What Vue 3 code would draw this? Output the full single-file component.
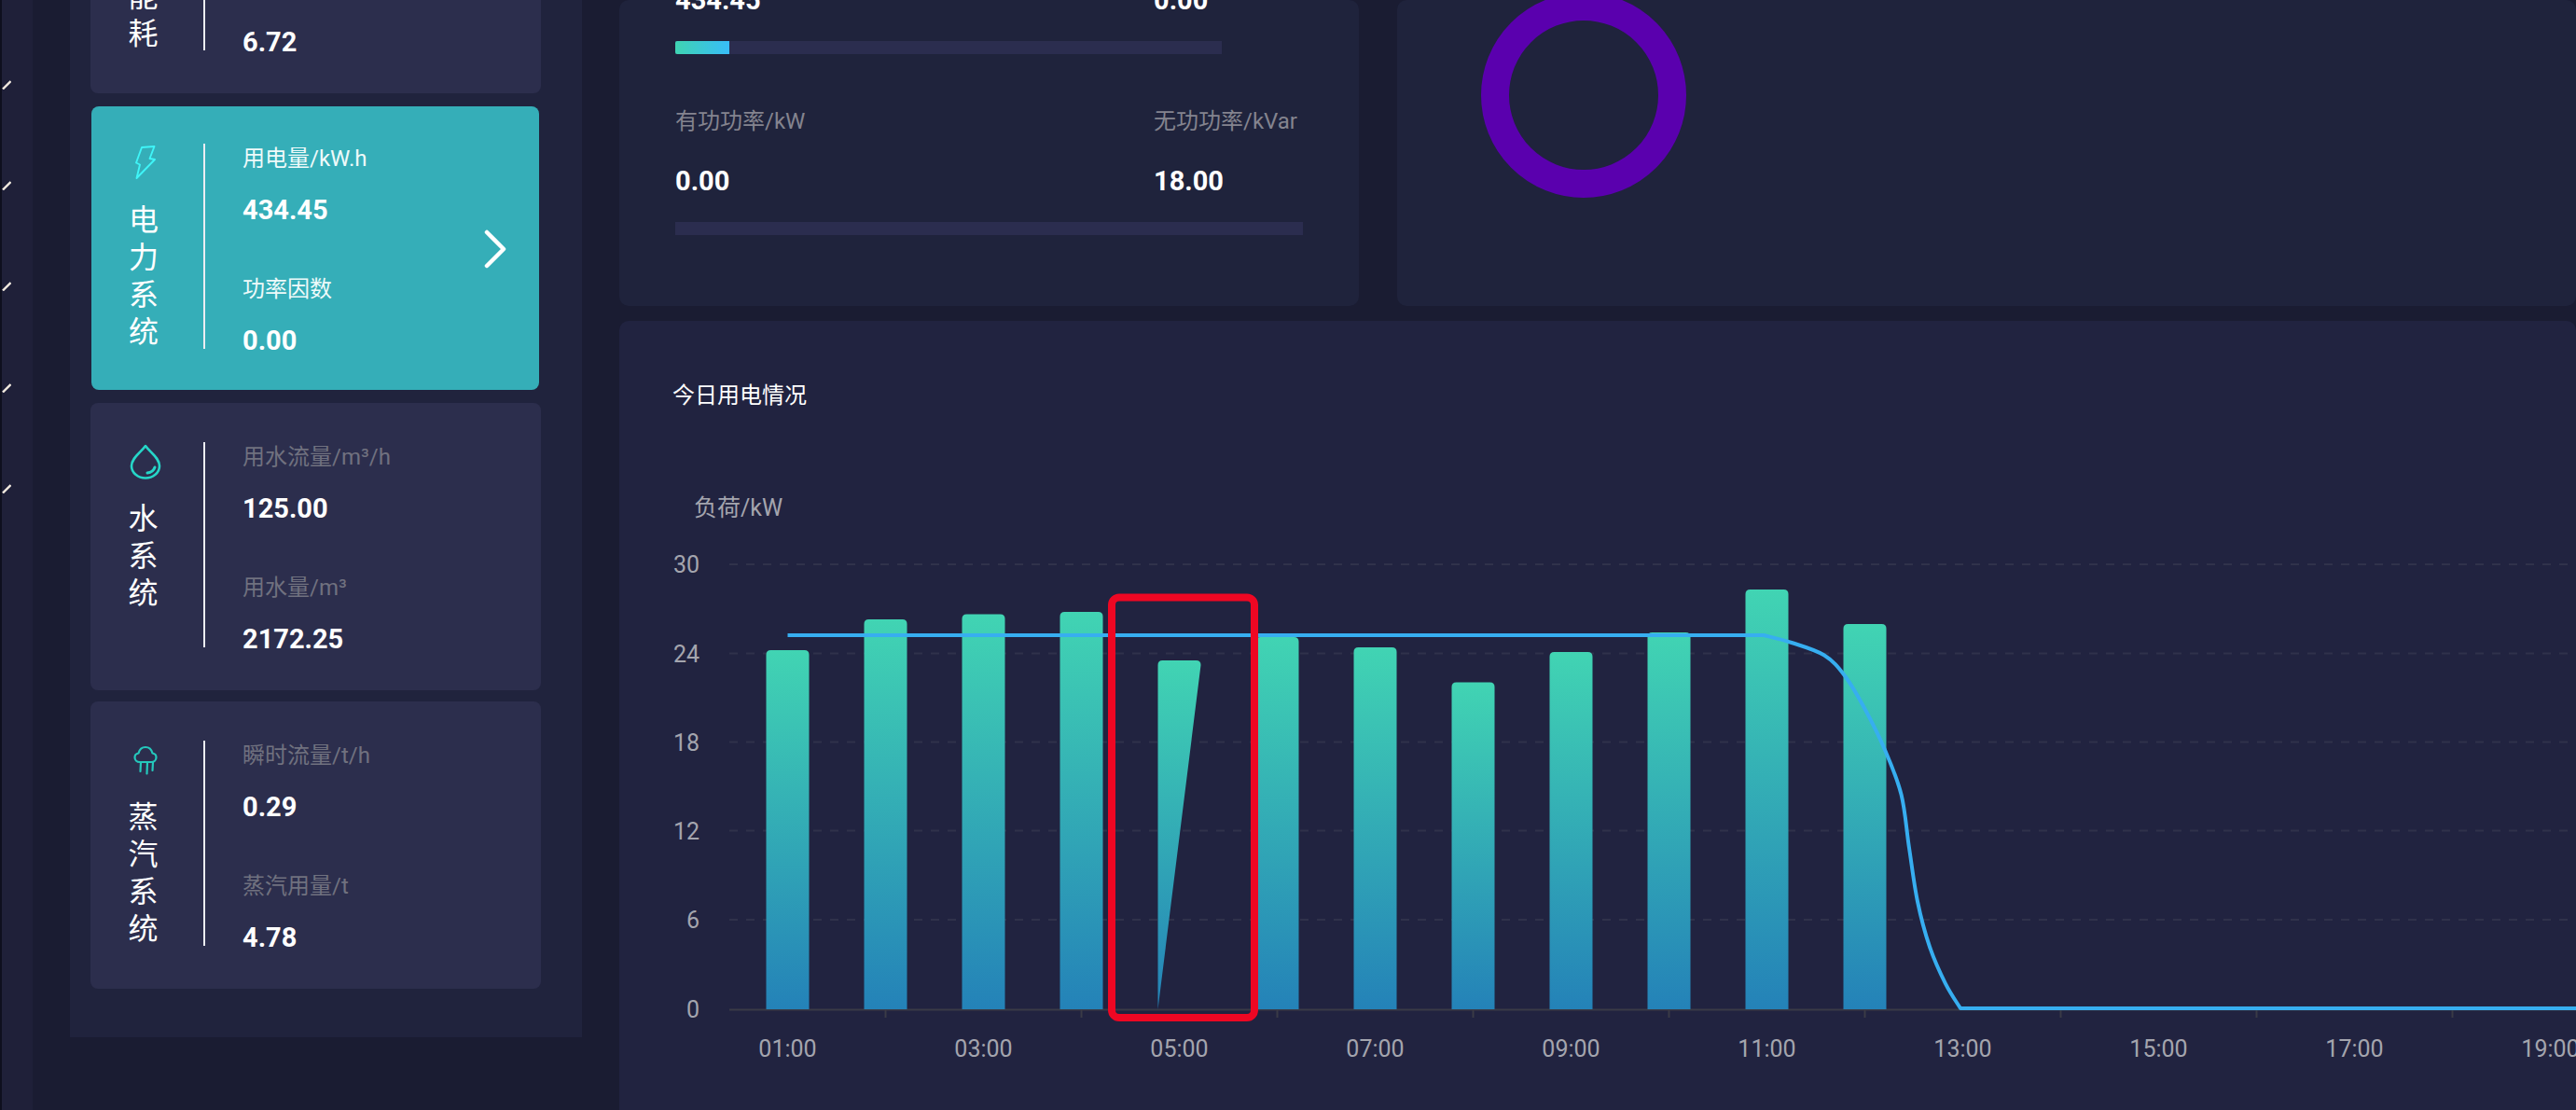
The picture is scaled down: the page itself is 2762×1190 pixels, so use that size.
<script setup>
const ticks = [0, 1, 2, 3, 4]

const systems = [
  { id: 'energy', name: '综合能耗', icon: '', m1: ['', ''], m2: ['', '6.72'] },
  { id: 'power', name: '电力系统', icon: 'bolt', active: true, m1: ['用电量/kW.h', '434.45'], m2: ['功率因数', '0.00'] },
  { id: 'water', name: '水系统', icon: 'drop', m1: ['用水流量/m³/h', '125.00'], m2: ['用水量/m³', '2172.25'] },
  { id: 'steam', name: '蒸汽系统', icon: 'steam', m1: ['瞬时流量/t/h', '0.29'], m2: ['蒸汽用量/t', '4.78'] }
]

const yAxis = [
  { label: '30', y: 605 },
  { label: '24', y: 700.5 },
  { label: '18', y: 795.5 },
  { label: '12', y: 890.5 },
  { label: '6', y: 986 },
  { label: '0', y: 1082 }
]

const xCenter = (i) => 844.5 + 105 * i
const xLabels = [0, 2, 4, 6, 8, 10, 12, 14, 16, 18].map((i) => ({
  x: xCenter(i),
  text: String(i + 1).padStart(2, '0') + ':00'
}))
const xTicks = [1, 3, 5, 7, 9, 11, 13, 15, 17].map(xCenter)

const tops = [697, 664, 658.5, 656, 708, 683, 694, 731.5, 699, 678, 632, 669]
const base = 1082
const barW = 46
const bars = tops.map((top, i) => {
  const l = xCenter(i) - barW / 2
  const r = l + barW
  const end = i === 4 ? `L${l} ${base}` : `V${base} H${l}`
  return `M${l} ${base} V${top + 5} Q${l} ${top} ${l + 5} ${top} H${r - 5} Q${r} ${top} ${r} ${top + 5} ${end} Z`
})

const curve = [
  [1891, 681], [1921, 689], [1956, 702.5], [1978, 724.5], [1999.5, 760], [2021, 804],
  [2038.6, 852], [2047, 909], [2056, 966.5], [2069, 1015], [2086, 1054.6], [2102, 1081]
]
let linePath = 'M844.5 681 L1891 681'
for (let i = 0; i < curve.length - 1; i++) {
  const p0 = curve[Math.max(i - 1, 0)]
  const p1 = curve[i]
  const p2 = curve[i + 1]
  const p3 = curve[Math.min(i + 2, curve.length - 1)]
  const c1 = [p1[0] + (p2[0] - p0[0]) / 6, p1[1] + (p2[1] - p0[1]) / 6]
  const c2 = [p2[0] - (p3[0] - p1[0]) / 6, p2[1] - (p3[1] - p1[1]) / 6]
  linePath += ` C${c1[0]} ${c1[1]} ${c2[0]} ${c2[1]} ${p2[0]} ${p2[1]}`
}
linePath += ' L2762 1081'
</script>

<template>
  <div class="page">
    <nav class="rail">
      <svg v-for="t in ticks" :key="t" class="tick" width="10" height="10" viewBox="0 0 10 10">
        <path d="M1 9.5 L9.5 1" />
      </svg>
    </nav>

    <aside class="panel">
      <div class="system-list">
        <section v-for="s in systems" :key="s.id" class="system" :class="{ active: s.active }">
          <div class="name-col">
            <div class="icon-box">
              <svg v-if="s.icon === 'bolt'" class="ic ic-bolt" width="22" height="37" viewBox="0 0 22 37">
                <path d="M7 2 L20.5 1 L15.5 14 L21 15 L1.5 35 L5 20.5 L1 18.5 Z" />
              </svg>
              <svg v-if="s.icon === 'drop'" class="ic ic-drop" width="34" height="38" viewBox="0 0 34 38">
                <path d="M17 2 C12 9 2 15 2 23.5 C2 31 9 36.5 17 36.5 C25 36.5 32 31 32 23.5 C32 15 22 9 17 2 Z" />
                <path class="glint" d="M19 31 C23 30.5 26 28 27 25" />
              </svg>
              <svg v-if="s.icon === 'steam'" class="ic ic-steam" width="26" height="32" viewBox="0 0 26 32">
                <path d="M7 18 C3.5 18 1.5 15.5 1.5 13 C1.5 10.5 3.5 8.8 5.5 8.5 C6.5 4.5 9.5 2 13 2 C16.5 2 19.5 4.5 20.5 8.5 C22.5 8.8 24.5 10.5 24.5 13 C24.5 15.5 22.5 18 19 18 H9" />
                <path d="M8 18 L7.5 28 M15 18 L14.5 30.5 M21 18 L20.5 27" />
              </svg>
            </div>
            <span v-for="c in s.name" :key="c" class="name-char">{{ c }}</span>
          </div>
          <div class="divider"></div>
          <div class="metrics">
            <div class="metric">
              <div class="m-label">{{ s.m1[0] }}</div>
              <div class="m-value">{{ s.m1[1] }}</div>
            </div>
            <div class="metric">
              <div class="m-label">{{ s.m2[0] }}</div>
              <div class="m-value">{{ s.m2[1] }}</div>
            </div>
          </div>
          <svg v-if="s.active" class="chevron" width="24" height="42" viewBox="0 0 24 42">
            <path d="M3 3 L21 21 L3 39" />
          </svg>
        </section>
      </div>
    </aside>

    <main class="main">
      <div class="top-row">
        <section class="card power-card">
          <div class="pw-block">
            <div class="pw-cols">
              <div class="pw-col"><div class="pw-value">434.45</div></div>
              <div class="pw-col"><div class="pw-value">0.00</div></div>
            </div>
            <div class="track track-short"><div class="fill"></div></div>
          </div>
          <div class="pw-block pw-second">
            <div class="pw-cols">
              <div class="pw-col">
                <div class="pw-label">有功功率/kW</div>
                <div class="pw-value spaced">0.00</div>
              </div>
              <div class="pw-col">
                <div class="pw-label">无功功率/kVar</div>
                <div class="pw-value spaced">18.00</div>
              </div>
            </div>
            <div class="track track-long"></div>
          </div>
        </section>
        <section class="card ring-card">
          <div class="ring"></div>
        </section>
      </div>

      <section class="card chart-card">
        <h3 class="chart-title">今日用电情况</h3>
        <svg class="chart" width="2098" height="690" viewBox="664 500 2098 690">
          <defs>
            <linearGradient id="barGrad" x1="0" y1="0" x2="0" y2="1">
              <stop offset="0" stop-color="#41d4b3" />
              <stop offset="1" stop-color="#2482b8" />
            </linearGradient>
          </defs>
          <text x="744" y="553" class="axis-text">负荷/kW</text>
          <g v-for="g in yAxis" :key="g.label">
            <line v-if="g.label !== '0'" x1="782" x2="2762" :y1="g.y" :y2="g.y" class="grid" />
            <text x="750" :y="g.y + 9" text-anchor="end" class="axis-text">{{ g.label }}</text>
          </g>
          <line x1="782" x2="2762" y1="1082.5" y2="1082.5" class="axis" />
          <line v-for="x in xTicks" :key="x" :x1="x" :x2="x" y1="1082" y2="1091" class="axis" />
          <path v-for="(d, i) in bars" :key="i" :d="d" fill="url(#barGrad)" />
          <path :d="linePath" class="load-line" />
          <text v-for="l in xLabels" :key="l.text" :x="l.x" y="1133" text-anchor="middle" class="axis-text">{{ l.text }}</text>
          <rect x="1192" y="640.5" width="153" height="450.5" rx="8" class="mark" />
        </svg>
      </section>
    </main>
  </div>
</template>

<style scoped>
.page {
  display: flex;
  width: 2762px;
  height: 1190px;
  overflow: hidden;
  background: #1a1c32;
  font-family: Roboto, "Noto Sans CJK SC", sans-serif;
  color: #fff;
}
.rail {
  flex: none;
  box-sizing: border-box;
  width: 35px;
  border-left: 2px solid #0e0f1e;
  background: #1f2039;
  padding-top: 86px;
  display: flex;
  flex-direction: column;
  gap: 98.2px;
}
.tick path {
  stroke: #f3ebe0;
  stroke-width: 2.4;
  fill: none;
}
.panel {
  flex: none;
  box-sizing: border-box;
  width: 549px;
  height: 1112px;
  margin-left: 40px;
  background: #20233d;
  padding-left: 22px;
  padding-right: 44px;
}
.system-list {
  display: flex;
  flex-direction: column;
  gap: 12px;
  margin-top: -208px;
}
.system {
  box-sizing: border-box;
  display: flex;
  height: 308px;
  padding-top: 42px;
  border-radius: 8px;
  background: #2c2e4d;
}
.system.active {
  height: 304px;
  margin: 2px 2px 2px 1px;
  padding-top: 40px;
  background: #35aeb8;
}
.name-col {
  flex: none;
  width: 121px;
  padding-top: 1px;
  padding-right: 8px;
  box-sizing: border-box;
  display: flex;
  flex-direction: column;
  align-items: center;
}
.active .name-col {
  width: 120px;
}
.icon-box {
  height: 61px;
  flex: none;
  display: flex;
  align-items: flex-start;
  justify-content: center;
}
.ic {
  display: block;
  margin-left: 4px;
  fill: none;
  stroke-linejoin: round;
  stroke-linecap: round;
}
.ic-bolt {
  margin-top: 1px;
  stroke: #3ff5f8;
  stroke-width: 1.9;
}
.ic-drop {
  margin-top: 1px;
  stroke: #26d6c8;
  stroke-width: 2.6;
}
.ic-drop .glint {
  stroke-width: 3;
}
.ic-steam {
  margin-top: 4px;
  stroke: #25c8bc;
  stroke-width: 2.2;
}
.name-char {
  height: 40px;
  line-height: 40px;
  font-size: 32px;
  color: #fff;
}
.divider {
  flex: none;
  width: 2px;
  height: 220px;
  background: #ecedf2;
}
.metrics {
  margin-left: 40px;
  padding-top: 1px;
  flex: 1;
}
.metric {
  display: grid;
  grid-template-rows: 30px 30px;
  row-gap: 25px;
  margin-bottom: 55px;
}
.m-label {
  font-size: 24px;
  line-height: 30px;
  color: #70717f;
  white-space: nowrap;
}
.active .m-label {
  color: #eefafa;
}
.m-value {
  font-size: 29px;
  line-height: 30px;
  font-weight: 700;
  color: #fff;
}
.chevron {
  flex: none;
  align-self: center;
  margin: -38px 35px 0 0;
  fill: none;
  stroke: #fff;
  stroke-width: 4.5;
  stroke-linecap: round;
  stroke-linejoin: round;
}
.main {
  flex: none;
  width: 2098px;
  margin-left: 40px;
  display: flex;
  flex-direction: column;
  gap: 16px;
}
.card {
  border-radius: 10px;
  background: #1f233c;
}
.top-row {
  flex: none;
  height: 328px;
  display: flex;
  gap: 41px;
}
.power-card {
  box-sizing: border-box;
  flex: none;
  width: 793px;
  height: 328px;
  padding: 0 0 76px 60px;
  display: flex;
  flex-direction: column;
  justify-content: flex-end;
}
.pw-second {
  margin-top: 55px;
}
.pw-cols {
  display: flex;
}
.pw-col {
  flex: none;
  width: 513px;
}
.pw-label {
  font-size: 24px;
  line-height: 34px;
  color: #84848f;
  white-space: nowrap;
}
.pw-value {
  font-size: 29px;
  line-height: 30px;
  font-weight: 700;
}
.pw-value.spaced {
  margin-top: 32px;
}
.track {
  height: 14px;
  margin-top: 29px;
  background: #2b2d4f;
}
.track-short {
  width: 586px;
}
.track-long {
  width: 673px;
}
.fill {
  width: 58px;
  height: 14px;
  border-radius: 2px 0 0 2px;
  background: linear-gradient(90deg, #3fd3b2, #38bdf8);
}
.ring-card {
  flex: 1;
  padding-left: 90px;
}
.ring {
  box-sizing: border-box;
  width: 220px;
  height: 220px;
  margin-top: -8px;
  border: 30px solid #5a00ae;
  border-radius: 50%;
}
.chart-card {
  flex: 1;
  min-height: 0;
  overflow: hidden;
  border-radius: 10px 10px 0 0;
  background: #212340;
}
.chart-title {
  margin: 65px 0 61px 57px;
  font-size: 24px;
  line-height: 30px;
  font-weight: 400;
  color: #fff;
}
.chart {
  display: block;
}
.axis-text {
  font-size: 25px;
  fill: #a4a5ae;
}
.grid {
  stroke: #30324b;
  stroke-width: 2;
  stroke-dasharray: 9 9;
}
.axis {
  stroke: #3a3b46;
  stroke-width: 2;
}
.load-line {
  fill: none;
  stroke: #37aef0;
  stroke-width: 4;
  stroke-linejoin: round;
}
.mark {
  fill: none;
  stroke: #ee0723;
  stroke-width: 8;
}
</style>

<style>
body {
  margin: 0;
  background: #1a1c32;
}
</style>
